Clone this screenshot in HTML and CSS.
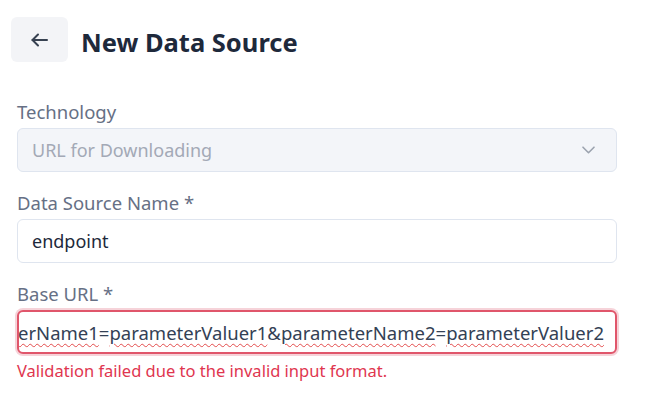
FILE: index.html
```html
<!DOCTYPE html>
<html lang="en">
<head>
  <meta charset="UTF-8" />
  <title>New Data Source</title>
  <link rel="stylesheet" href="styles.css">
</head>
<body>
  <div class="page">
    <div class="header">
      <button class="back-btn" aria-label="Back">
        <svg width="17" height="14" viewBox="0 0 17 14" fill="none" stroke="#374151" stroke-width="2" stroke-linecap="round" stroke-linejoin="round">
          <path d="M16 7H1.5"/>
          <path d="M7 1.5L1.5 7L7 12.5"/>
        </svg>
      </button>
      <h1>New Data Source</h1>
    </div>

    <div class="field">
      <label>Technology</label>
      <div class="select disabled">
        <span>URL for Downloading</span>
        <svg width="13" height="8" viewBox="0 0 13 8" fill="none" stroke="#9ca3af" stroke-width="1.6" stroke-linecap="round" stroke-linejoin="round">
          <path d="M1 1.2l5.5 5.5 5.5-5.5"/>
        </svg>
      </div>
    </div>

    <div class="field">
      <label>Data Source Name *</label>
      <div class="input">endpoint</div>
    </div>

    <div class="field">
      <label>Base URL *</label>
      <div class="input invalid">
        <span class="url"><span class="typo">erName1</span>=<span class="typo">parameterValuer1</span>&amp;<span class="typo">parameterName2</span>=<span class="typo">parameterValuer2</span></span>
      </div>
      <div class="error">Validation failed due to the invalid input format.</div>
    </div>
  </div>
</body>
</html>
```

FILE: styles.css
```css
* {
  box-sizing: border-box;
  font-family: 'Noto Sans', sans-serif;
}

body {
  margin: 0;
  background-color: #ffffff;
  color: #1e293b;
}

.page {
  width: 600px;
  margin-left: 17px;
  padding-top: 17px;
}

.header {
  display: flex;
  align-items: center;
  gap: 13px;
  margin-left: -6px;
  margin-bottom: 38px;
}

.back-btn {
  width: 57px;
  height: 45px;
  border: none;
  border-radius: 6px;
  background-color: #f3f4f7;
  display: flex;
  align-items: center;
  justify-content: center;
  padding: 0;
}

h1 {
  margin: 0;
  font-size: 25.5px;
  line-height: 34px;
  font-weight: 700;
  color: #1e293b;
  margin-top: 4px;
}

.field {
  display: flex;
  flex-direction: column;
  margin-bottom: 19px;
}

label {
  font-size: 18.5px;
  line-height: 24px;
  color: #667085;
  margin-bottom: 4px;
}

.select,
.input {
  height: 44px;
  border: 1px solid #dfe5ef;
  border-radius: 6px;
  padding: 0 14px;
  display: flex;
  align-items: center;
  font-size: 18px;
  overflow: hidden;
  white-space: nowrap;
}

.select {
  justify-content: space-between;
  background-color: #f3f5f9;
  color: #a3a9b6;
  padding-right: 21px;
}

.input {
  background-color: #ffffff;
  color: #1e293b;
}

.input.invalid {
  border: 2px solid #e0566b;
  box-shadow: 0 0 0 2px #f6d3d9;
  justify-content: flex-end;
  padding: 0 11px 0 1px;
}

.url {
  flex-shrink: 0;
  font-size: 18.5px;
  color: #334155;
}

.typo {
  text-decoration: underline wavy #e34b4b;
  text-decoration-thickness: 1px;
  text-underline-offset: 3px;
}

.error {
  margin-top: 6px;
  font-size: 16.5px;
  line-height: 22px;
  color: #e0364f;
}
```
